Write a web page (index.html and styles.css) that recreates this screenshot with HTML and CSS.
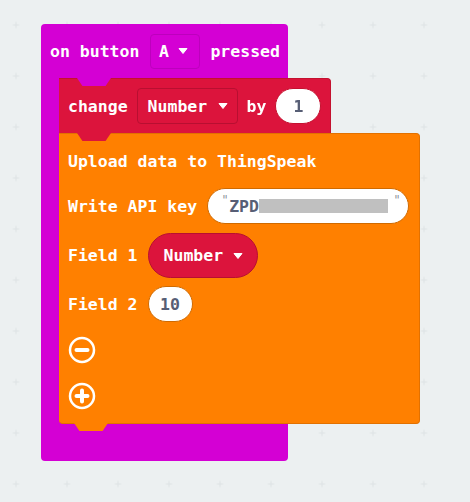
FILE: index.html
```html
<!DOCTYPE html>
<html>
  <head>
    <meta charset="utf-8">
    <title>on button A pressed</title>
    <link rel="stylesheet" href="styles.css">
  </head>
  <body>
    <svg class="grid" width="100%" height="100%">
      <defs>
        <pattern id="cross" width="51" height="51" x="-9.5" y="-0.5" patternUnits="userSpaceOnUse">
          <path d="M22.5 25.5h6M25.5 22.5v6" stroke="#dde2e4" stroke-width="1"/>
        </pattern>
      </defs>
      <rect width="100%" height="100%" fill="url(#cross)"/>
    </svg>

    <div class="hat">
      <div class="hat-head tab">
        <span>on button</span>
        <span class="drop drop-btn">A <svg class="caret" viewBox="0 0 10 6"><path d="M1 0.5h8l-4 5z" fill="#fff" stroke="#fff" stroke-linejoin="round"/></svg></span>
        <span>pressed</span>
      </div>

      <div class="hat-body">
        <div class="stack">
          <div class="blk red tab">
            <span>change</span>
            <span class="drop drop-var">Number <svg class="caret" viewBox="0 0 10 6"><path d="M1 0.5h8l-4 5z" fill="#fff" stroke="#fff" stroke-linejoin="round"/></svg></span>
            <span>by</span>
            <span class="num num-1">1</span>
          </div>

          <div class="blk orange tab">
            <div class="row r1"><span>Upload data to ThingSpeak</span></div>
            <div class="row r2">
              <span>Write API key</span>
              <span class="str">
                <span class="q">"</span>
                <span class="key">ZPD</span>
                <span class="hidden"></span>
                <span class="q q-end">"</span>
              </span>
            </div>
            <div class="row r3">
              <span>Field 1</span>
              <span class="var">Number <svg class="caret" viewBox="0 0 10 6"><path d="M1 0.5h8l-4 5z" fill="#fff" stroke="#fff" stroke-linejoin="round"/></svg></span>
            </div>
            <div class="row r4">
              <span>Field 2</span>
              <span class="num num-10">10</span>
            </div>
            <div class="row r5">
              <svg class="icon" viewBox="0 0 28 28"><circle cx="14" cy="14" r="12" fill="none" stroke="#fff" stroke-width="2.5"/><path d="M8.5 14h11" stroke="#fff" stroke-width="4" stroke-linecap="round"/></svg>
            </div>
            <div class="row r6">
              <svg class="icon" viewBox="0 0 28 28"><circle cx="14" cy="14" r="12" fill="none" stroke="#fff" stroke-width="2.5"/><path d="M8.5 14h11M14 8.5v11" stroke="#fff" stroke-width="4" stroke-linecap="round"/></svg>
            </div>
          </div>
        </div>
      </div>

      <div class="hat-foot"></div>
    </div>
  </body>
</html>
```

FILE: styles.css
```css
  *{
    margin: 0;
    padding: 0;
    box-sizing: border-box;
  }
  body{
    background: #ecf0f1;
    font-family: "DejaVu Sans Mono", "Liberation Mono", monospace;
    font-weight: bold;
    font-size: 16.5px;
    color: #fff;
    overflow: hidden;
  }
  .grid{
    position: fixed;
    top: 0;
    left: 0;
    z-index: -1;
  }
  .hat{
    margin: 24px 0 0 41px;
    width: 247px;
  }
  .hat-head{
    height: 54px;
    background: #d400d4;
    border-radius: 4px 4px 0 0;
    display: flex;
    align-items: center;
    gap: 10.5px;
    padding-left: 9px;
    white-space: nowrap;
  }
  .tab{
    position: relative;
  }
  .tab::after{
    content: "";
    position: absolute;
    z-index: 1;
    left: 18px;
    bottom: -8px;
    width: 34px;
    height: 8px;
    background: inherit;
    border-radius: 0 0 4px 4px;
    clip-path: polygon(0 0, 100% 0, 84% 100%, 16% 100%);
  }
  .hat-head::after{
    left: 36px;
    background: #d400d4;
  }
  .hat-body{
    background: #d400d4;
    padding-left: 18px;
  }
  .stack{
    width: 361px;
  }
  .hat-foot{
    height: 37px;
    background: #d400d4;
    border-radius: 0 0 4px 4px;
  }

  .drop{
    display: flex;
    align-items: center;
    height: 35px;
    border-radius: 4px;
  }
  .drop-btn{
    width: 50px;
    padding-left: 8px;
    gap: 9px;
    border: 1px solid #bd00bd;
  }
  .caret{
    width: 10px;
    height: 6px;
  }

  .blk{
    white-space: nowrap;
  }
  .red{
    width: 272px;
    height: 55px;
    background: #dc143c;
    border: 1px solid #c4112f;
    border-left: none;
    border-bottom: none;
    border-radius: 0 4px 0 0;
    display: flex;
    align-items: center;
    gap: 9px;
    padding: 0 0 0 9px;
  }
  .red::after{
    background: #dc143c;
  }
  .drop-var{
    width: 101px;
    height: 36px;
    padding-left: 10px;
    gap: 11px;
    border: 1px solid #b80f31;
  }
  .num{
    display: flex;
    align-items: center;
    justify-content: center;
    height: 36px;
    background: #fff;
    border-radius: 18px;
    color: #575e75;
  }
  .num-1{
    width: 46px;
    border: 1px solid #c4112f;
  }
  .num-10{
    width: 45px;
    border: 1px solid #d06a00;
  }

  .orange{
    width: 361px;
    background: #ff8000;
    border: 1px solid #e27100;
    border-left: none;
    border-radius: 0 4px 4px 4px;
    padding: 7px 0 3px 9px;
  }
  .orange::after{
    left: 15px;
    background: #ff8000;
  }
  .row{
    display: flex;
    align-items: center;
    gap: 10px;
  }
  .r1{ height: 40px; }
  .r2{ height: 50px; }
  .r3{ height: 49px; }
  .r4{ height: 48px; }
  .r5{ height: 44px; }
  .r6{ height: 48px; }

  .str{
    display: flex;
    align-items: center;
    width: 202px;
    height: 36px;
    background: #fff;
    border: 1px solid #d06a00;
    border-radius: 18px;
    padding-left: 14px;
    color: #575e75;
  }
  .q{
    align-self: flex-start;
    margin-top: 4px;
    font-family: "DejaVu Sans", sans-serif;
    font-weight: normal;
    font-size: 12px;
    color: #8c919c;
    width: 7px;
  }
  .q-end{
    margin-left: 6px;
  }
  .key{
    width: 30px;
  }
  .hidden{
    width: 129px;
    height: 14px;
    background: #c0c0c0;
  }
  .var{
    display: flex;
    align-items: center;
    width: 110px;
    height: 45px;
    padding-left: 15px;
    gap: 10px;
    background: #dc143c;
    border: 1px solid #b80f31;
    border-radius: 23px;
  }
  .icon{
    width: 28px;
    height: 28px;
  }
```
